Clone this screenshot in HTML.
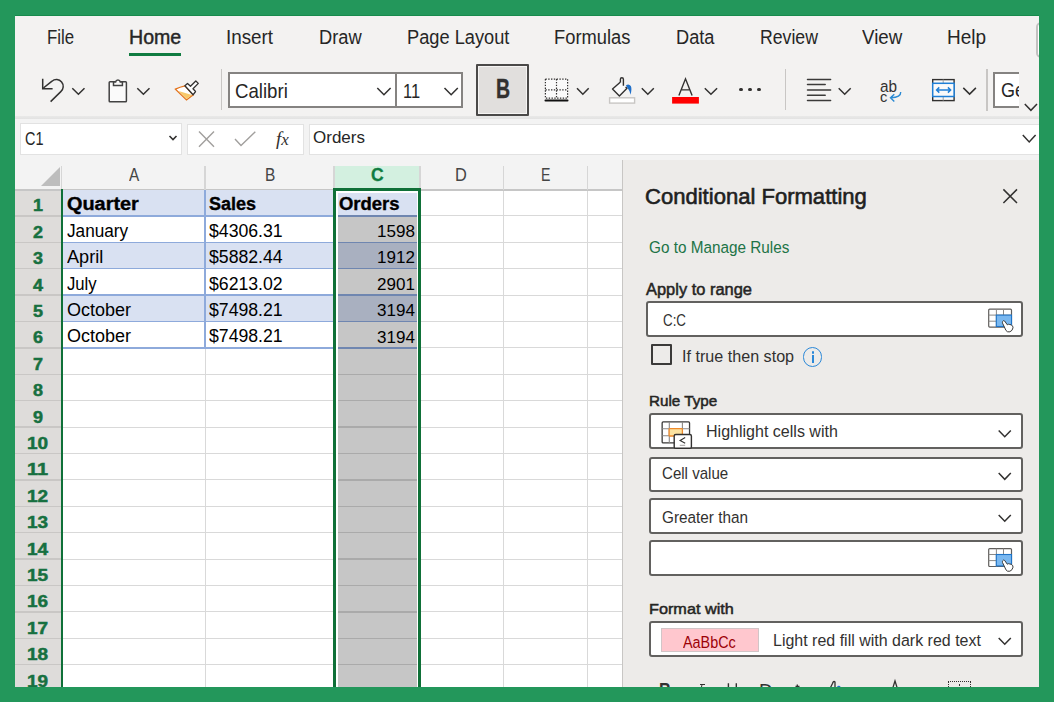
<!DOCTYPE html><html><head><meta charset="utf-8"><style>
*{box-sizing:border-box;margin:0;padding:0}
body{width:1054px;height:702px;background:#23975b;position:relative;overflow:hidden;font-family:"Liberation Sans",sans-serif}
#app{position:absolute;left:15px;top:16px;width:1024px;height:671px;overflow:hidden;background:#f3f2f1;box-shadow:0 -1px 0 #178a4c}
#in{position:absolute;left:-15px;top:-16px;width:1054px;height:702px}
.ab{position:absolute}
svg{position:absolute;overflow:visible}
.t{position:absolute;white-space:nowrap;line-height:1}
.tab{font-size:19px;color:#262626}
.cl{font-size:17px;color:#000}
.bd{font-weight:bold}
.rh{font-size:17px;color:#107c41;font-weight:bold;text-align:center;width:46px;left:15px}
.lbl{font-size:15.5px;color:#252423;font-weight:bold}
.box{position:absolute;background:#fff;border:2px solid #62615f;border-radius:3px}
.bt{font-size:16px;color:#323130}
</style></head><body><div id="app"><div id="in">
<div class="t" style="left:47.30px;top:27.10px;font-size:20.00px;color:#262626;transform:scaleX(0.8416);transform-origin:0 0;">File</div>
<div class="t" style="left:128.70px;top:27.10px;font-size:20.00px;color:#262626;-webkit-text-stroke:0.45px #262626;transform:scaleX(0.9794);transform-origin:0 0;">Home</div>
<div class="t" style="left:226.00px;top:27.10px;font-size:20.00px;color:#262626;transform:scaleX(0.9400);transform-origin:0 0;">Insert</div>
<div class="t" style="left:318.50px;top:27.10px;font-size:20.00px;color:#262626;transform:scaleX(0.9143);transform-origin:0 0;">Draw</div>
<div class="t" style="left:406.90px;top:27.10px;font-size:20.00px;color:#262626;transform:scaleX(0.9118);transform-origin:0 0;">Page Layout</div>
<div class="t" style="left:554.00px;top:27.10px;font-size:20.00px;color:#262626;transform:scaleX(0.9161);transform-origin:0 0;">Formulas</div>
<div class="t" style="left:675.80px;top:27.10px;font-size:20.00px;color:#262626;transform:scaleX(0.9102);transform-origin:0 0;">Data</div>
<div class="t" style="left:759.70px;top:27.10px;font-size:20.00px;color:#262626;transform:scaleX(0.8841);transform-origin:0 0;">Review</div>
<div class="t" style="left:862.10px;top:27.10px;font-size:20.00px;color:#262626;transform:scaleX(0.9349);transform-origin:0 0;">View</div>
<div class="t" style="left:947.20px;top:27.10px;font-size:20.00px;color:#262626;transform:scaleX(0.9489);transform-origin:0 0;">Help</div>
<div class="ab" style="left:128.5px;top:53px;width:52.5px;height:3.3px;background:#107c41"></div>
<div class="ab" style="left:1035.5px;top:22px;width:12px;height:35.5px;border:2px solid #c2c1c0;border-radius:5px;background:#fff"></div>
<svg style="left:0;top:0" width="1" height="1"><g transform="translate(35,72)" fill="none" stroke="#323130" stroke-width="1.5"><path d="M7.7 6.8V16.8H17.6"/><path d="M8.4 16L17 9.2A6.8 6.8 0 0 1 25.8 19.6L15.6 29.6"/></g></svg>
<svg style="left:0;top:0" width="1" height="1"><polyline points="72.3,88.2 78.4,94.2 84.5,88.2" fill="none" stroke="#323130" stroke-width="1.5"/></svg>
<svg style="left:0;top:0" width="1" height="1"><g transform="translate(100,72)" stroke="#424242" stroke-width="1.5"><rect x="9.2" y="9.8" width="17.2" height="20" rx="0.8" fill="#fafafa"/><path d="M13.5 10V13.6H22.4V10H20.3A2.4 2.4 0 0 0 15.6 10Z" fill="#fafafa"/></g></svg>
<svg style="left:0;top:0" width="1" height="1"><polyline points="137.3,88.2 143.4,94.2 149.5,88.2" fill="none" stroke="#323130" stroke-width="1.5"/></svg>
<svg style="left:0;top:0" width="1" height="1"><g transform="translate(168,72)"><path d="M7.4 17.2Q12 14.8 16.9 13.8L25.1 22.8L18.5 28Z" fill="#fff" stroke="#e3731c" stroke-width="1.3"/><path d="M10.5 19L24 23L18.5 27Z" fill="#f7c96a"/><path d="M16.9 13.8L19.5 11.5L22.5 14.3L27.8 9L30.3 11.4L25 16.8L27.5 19.5L25.1 22.8Z" fill="#fff" stroke="#323130" stroke-width="1.3" stroke-linejoin="round"/></g></svg>
<div class="ab" style="left:220.75px;top:69px;width:1.5px;height:41px;background:#c8c6c4"></div>
<div class="ab" style="left:784.65px;top:68.5px;width:1.5px;height:41.5px;background:#c8c6c4"></div>
<div class="ab" style="left:986.05px;top:69px;width:1.5px;height:41.5px;background:#c8c6c4"></div>
<div class="ab" style="left:228px;top:71.5px;width:235px;height:36.5px;border:2px solid #858381;background:#fff"></div>
<div class="ab" style="left:395px;top:71.5px;width:2px;height:36.5px;background:#858381"></div>
<div class="t" style="left:234.80px;top:81.28px;font-size:20.14px;color:#262626;transform:scaleX(0.9263);transform-origin:0 0;">Calibri</div>
<svg style="left:0;top:0" width="1" height="1"><polyline points="377.3,88 383.95000000000005,94.8 390.6,88" fill="none" stroke="#323130" stroke-width="1.5"/></svg>
<div class="t" style="left:403.30px;top:81.52px;font-size:19.86px;color:#262626;transform:scaleX(0.8281);transform-origin:0 0;">11</div>
<svg style="left:0;top:0" width="1" height="1"><polyline points="444.5,88 451.15,94.8 457.8,88" fill="none" stroke="#323130" stroke-width="1.5"/></svg>
<div class="ab" style="left:475.7px;top:63.7px;width:53.3px;height:52.2px;border:2px solid #4a4948;background:#e1dfdd;border-radius:1px;box-shadow:inset 0 0 0 1px #f5f4f3"></div>
<div class="t" style="left:495.80px;top:76.31px;font-size:26.81px;color:#323130;font-weight:bold;-webkit-text-stroke:0.4px #323130;transform:scaleX(0.7252);transform-origin:0 0;">B</div>
<svg style="left:0;top:0" width="1" height="1"><g transform="translate(540,72)"><rect x="5.4" y="7.1" width="22.2" height="19.1" fill="#fafafa" stroke="#323130" stroke-width="1.2" stroke-dasharray="1.4 1.4"/><path d="M16.5 7.1V26.2M5.4 17.9H27.6" stroke="#323130" stroke-width="1.2" stroke-dasharray="1.4 1.4"/><path d="M5.4 28.5H27.6" stroke="#111" stroke-width="1.8" stroke-linecap="round"/></g></svg>
<svg style="left:0;top:0" width="1" height="1"><polyline points="577,88.2 582.85,94.2 588.7,88.2" fill="none" stroke="#323130" stroke-width="1.5"/></svg>
<svg style="left:0;top:0" width="1" height="1"><g transform="translate(602,72)"><path d="M18.2 10.2L10.5 17.1L17.4 23.9L25 16.3L23.6 14.9" fill="#fafafa" stroke="#323130" stroke-width="1.4" stroke-linejoin="round"/><path d="M18.4 10.5V7.3A1.5 1.5 0 0 1 21.4 7.3V13.7" fill="none" stroke="#323130" stroke-width="1.4"/><path d="M23.9 13.6Q26.5 11.2 28.8 14Q30.2 16.5 28.5 22.8Q27.5 18 25.2 15.5Z" fill="#1f6fc9"/><rect x="7.6" y="25.8" width="25" height="5.3" fill="#fff" stroke="#c8c6c4" stroke-width="1.4"/></g></svg>
<svg style="left:0;top:0" width="1" height="1"><polyline points="641.8,88.2 647.8,94.2 653.8,88.2" fill="none" stroke="#323130" stroke-width="1.5"/></svg>
<svg style="left:0;top:0" width="1" height="1"><g transform="translate(665,72)"><path d="M13.9 23.6L20.5 6.8L27.1 23.6M16.8 17.9H24.2" fill="none" stroke="#323130" stroke-width="1.4"/><rect x="7.1" y="25" width="26.8" height="6.6" fill="#f00"/></g></svg>
<svg style="left:0;top:0" width="1" height="1"><polyline points="704.8,88.2 710.95,94.2 717.1,88.2" fill="none" stroke="#323130" stroke-width="1.5"/></svg>
<div class="ab" style="left:739.4px;top:87.8px;width:3.2px;height:3.2px;border-radius:50%;background:#323130"></div>
<div class="ab" style="left:748.4px;top:87.8px;width:3.2px;height:3.2px;border-radius:50%;background:#323130"></div>
<div class="ab" style="left:757.4px;top:87.8px;width:3.2px;height:3.2px;border-radius:50%;background:#323130"></div>
<svg style="left:0;top:0" width="1" height="1"><g transform="translate(800,72)" stroke="#3b3a39" stroke-width="1.5" stroke-linecap="round"><path d="M7.5 7.4H30.6M7.5 12.6H25.2M7.5 18H30.6M7.5 23.2H25.2M7.5 28.5H30.6"/></g></svg>
<svg style="left:0;top:0" width="1" height="1"><polyline points="838.7,88.2 844.7,94.2 850.7,88.2" fill="none" stroke="#323130" stroke-width="1.5"/></svg>
<div class="t" style="left:879.70px;top:77.62px;font-size:16.32px;color:#323130;transform:scaleX(0.9382);transform-origin:0 0;">ab</div>
<div class="t" style="left:879.70px;top:89.34px;font-size:15.37px;color:#323130;transform:scaleX(0.9499);transform-origin:0 0;">c</div>
<svg style="left:0;top:0" width="1" height="1"><g transform="translate(870,72)" fill="none" stroke="#2a8ad4" stroke-width="1.4"><path d="M30.7 20Q31 25.5 21 25.8M24.3 22.2L20.5 25.8L24.3 29.6"/></g></svg>
<svg style="left:0;top:0" width="1" height="1"><g transform="translate(925,64)"><rect x="7.7" y="15.6" width="21.4" height="21" fill="#fafafa" stroke="#323130" stroke-width="1.4"/><path d="M18.2 15.6V36.6" stroke="#a0a0a0" stroke-width="1"/><rect x="7.7" y="19.3" width="21.4" height="13.2" fill="#fafafa" stroke="#1f7fd6" stroke-width="1.5"/><path d="M11.8 26H25.4M14.3 23.4L11.6 26L14.3 28.6M22.9 23.4L25.6 26L22.9 28.6" fill="none" stroke="#1f7fd6" stroke-width="1.5"/></g></svg>
<svg style="left:0;top:0" width="1" height="1"><polyline points="963.3,87.9 969.5999999999999,94.1 975.9,87.9" fill="none" stroke="#323130" stroke-width="1.5"/></svg>
<div class="ab" style="left:993px;top:71.5px;width:40px;height:36px;border:2px solid #858381;background:#fff"></div>
<div class="ab" style="left:1018.5px;top:70px;width:30px;height:40px;background:#f3f2f1"></div>
<div class="ab" style="left:995px;top:73px;width:23.5px;height:33px;overflow:hidden">
<div class="t" style="left:5.70px;top:8.32px;font-size:19.86px;color:#262626;transform:scaleX(0.9054);transform-origin:0 0;">Ge</div>
</div>
<svg style="left:0;top:0" width="1" height="1"><polyline points="1024.8,104 1030.9,110.3 1037,104" fill="none" stroke="#323130" stroke-width="1.5"/></svg>
<div class="ab" style="left:0;top:115.5px;width:1054px;height:3.5px;background:linear-gradient(#e9e9e8,#e2e2e2)"></div>
<div class="ab" style="left:0;top:119px;width:1054px;height:41px;background:#f3f3f3"></div>
<div class="ab" style="left:20.2px;top:123.3px;width:161.5px;height:32px;background:#fff;border:1.8px solid #e2e2e2"></div>
<div class="t" style="left:25.30px;top:130.08px;font-size:18.26px;color:#262626;transform:scaleX(0.7915);transform-origin:0 0;">C1</div>
<svg style="left:0;top:0" width="1" height="1"><polyline points="169.5,136 173,139.5 176.5,136" fill="none" stroke="#323130" stroke-width="1.6"/></svg>
<div class="ab" style="left:186.8px;top:123.5px;width:117px;height:31.7px;background:#fff;border:1.8px solid #e2e2e2"></div>
<svg style="left:0;top:0" width="1" height="1"><path d="M199 131.6L214 146.7M214 131.6L199 146.7" stroke="#a19f9d" stroke-width="1.4"/><polyline points="235,139 241,145.5 255.3,131.8" fill="none" stroke="#a19f9d" stroke-width="1.4"/></svg>
<div class="t" style="left:276px;top:129px;font-size:19px;color:#323130;font-family:'Liberation Serif',serif;font-style:italic">f<span style="font-size:17px">x</span></div>
<div class="ab" style="left:308.7px;top:123.5px;width:760px;height:31.7px;background:#fff;border:1.8px solid #e2e2e2"></div>
<div class="t" style="left:312.90px;top:128.72px;font-size:17.39px;color:#262626;transform:scaleX(0.9787);transform-origin:0 0;">Orders</div>
<svg style="left:0;top:0" width="1" height="1"><polyline points="1022.8,135 1029.1999999999998,142 1035.6,135" fill="none" stroke="#323130" stroke-width="1.5"/></svg>
<div class="ab" style="left:15px;top:160px;width:607px;height:530px;background:#fff"></div>
<div class="ab" style="left:15px;top:155px;width:607px;height:34.5px;background:#f3f3f3"></div>
<div class="ab" style="left:15px;top:189.5px;width:46px;height:500px;background:#dedcda"></div>
<div class="ab" style="left:61.5px;top:215.4px;width:561px;height:1px;background:#d9d9d9"></div>
<div class="ab" style="left:15px;top:215.15px;width:46px;height:1.5px;background:#c9c7c5"></div>
<div class="ab" style="left:61.5px;top:241.8px;width:561px;height:1px;background:#d9d9d9"></div>
<div class="ab" style="left:15px;top:241.55px;width:46px;height:1.5px;background:#c9c7c5"></div>
<div class="ab" style="left:61.5px;top:268.2px;width:561px;height:1px;background:#d9d9d9"></div>
<div class="ab" style="left:15px;top:267.95px;width:46px;height:1.5px;background:#c9c7c5"></div>
<div class="ab" style="left:61.5px;top:294.6px;width:561px;height:1px;background:#d9d9d9"></div>
<div class="ab" style="left:15px;top:294.35px;width:46px;height:1.5px;background:#c9c7c5"></div>
<div class="ab" style="left:61.5px;top:321.0px;width:561px;height:1px;background:#d9d9d9"></div>
<div class="ab" style="left:15px;top:320.75px;width:46px;height:1.5px;background:#c9c7c5"></div>
<div class="ab" style="left:61.5px;top:347.4px;width:561px;height:1px;background:#d9d9d9"></div>
<div class="ab" style="left:15px;top:347.15px;width:46px;height:1.5px;background:#c9c7c5"></div>
<div class="ab" style="left:61.5px;top:373.79999999999995px;width:561px;height:1px;background:#d9d9d9"></div>
<div class="ab" style="left:15px;top:373.54999999999995px;width:46px;height:1.5px;background:#c9c7c5"></div>
<div class="ab" style="left:61.5px;top:400.2px;width:561px;height:1px;background:#d9d9d9"></div>
<div class="ab" style="left:15px;top:399.95px;width:46px;height:1.5px;background:#c9c7c5"></div>
<div class="ab" style="left:61.5px;top:426.6px;width:561px;height:1px;background:#d9d9d9"></div>
<div class="ab" style="left:15px;top:426.35px;width:46px;height:1.5px;background:#c9c7c5"></div>
<div class="ab" style="left:61.5px;top:453.0px;width:561px;height:1px;background:#d9d9d9"></div>
<div class="ab" style="left:15px;top:452.75px;width:46px;height:1.5px;background:#c9c7c5"></div>
<div class="ab" style="left:61.5px;top:479.4px;width:561px;height:1px;background:#d9d9d9"></div>
<div class="ab" style="left:15px;top:479.15px;width:46px;height:1.5px;background:#c9c7c5"></div>
<div class="ab" style="left:61.5px;top:505.79999999999995px;width:561px;height:1px;background:#d9d9d9"></div>
<div class="ab" style="left:15px;top:505.54999999999995px;width:46px;height:1.5px;background:#c9c7c5"></div>
<div class="ab" style="left:61.5px;top:532.2px;width:561px;height:1px;background:#d9d9d9"></div>
<div class="ab" style="left:15px;top:531.95px;width:46px;height:1.5px;background:#c9c7c5"></div>
<div class="ab" style="left:61.5px;top:558.5999999999999px;width:561px;height:1px;background:#d9d9d9"></div>
<div class="ab" style="left:15px;top:558.3499999999999px;width:46px;height:1.5px;background:#c9c7c5"></div>
<div class="ab" style="left:61.5px;top:585.0px;width:561px;height:1px;background:#d9d9d9"></div>
<div class="ab" style="left:15px;top:584.75px;width:46px;height:1.5px;background:#c9c7c5"></div>
<div class="ab" style="left:61.5px;top:611.4px;width:561px;height:1px;background:#d9d9d9"></div>
<div class="ab" style="left:15px;top:611.15px;width:46px;height:1.5px;background:#c9c7c5"></div>
<div class="ab" style="left:61.5px;top:637.8px;width:561px;height:1px;background:#d9d9d9"></div>
<div class="ab" style="left:15px;top:637.55px;width:46px;height:1.5px;background:#c9c7c5"></div>
<div class="ab" style="left:61.5px;top:664.2px;width:561px;height:1px;background:#d9d9d9"></div>
<div class="ab" style="left:15px;top:663.95px;width:46px;height:1.5px;background:#c9c7c5"></div>
<div class="ab" style="left:61.5px;top:690.5999999999999px;width:561px;height:1px;background:#d9d9d9"></div>
<div class="ab" style="left:15px;top:690.3499999999999px;width:46px;height:1.5px;background:#c9c7c5"></div>
<div class="ab" style="left:61.5px;top:717.0px;width:561px;height:1px;background:#d9d9d9"></div>
<div class="ab" style="left:15px;top:716.75px;width:46px;height:1.5px;background:#c9c7c5"></div>
<div class="ab" style="left:204.5px;top:189.5px;width:1px;height:500px;background:#d9d9d9"></div>
<div class="ab" style="left:333.5px;top:189.5px;width:1px;height:500px;background:#d9d9d9"></div>
<div class="ab" style="left:419.5px;top:189.5px;width:1px;height:500px;background:#d9d9d9"></div>
<div class="ab" style="left:503.0px;top:189.5px;width:1px;height:500px;background:#d9d9d9"></div>
<div class="ab" style="left:587.0px;top:189.5px;width:1px;height:500px;background:#d9d9d9"></div>
<div class="ab" style="left:15px;top:189px;width:607px;height:1.7px;background:#c6c6c6"></div>
<svg style="left:0;top:0" width="1" height="1"><polygon points="60,167 60,186 41,186" fill="#bdbdbd"/></svg>
<div class="ab" style="left:333.5px;top:165.5px;width:87px;height:23.5px;background:#d3f0e0"></div>
<div class="ab" style="left:60.75px;top:165.5px;width:1.5px;height:24px;background:#d6d6d6"></div>
<div class="ab" style="left:204.25px;top:165.5px;width:1.5px;height:24px;background:#d6d6d6"></div>
<div class="ab" style="left:333.25px;top:165.5px;width:1.5px;height:24px;background:#d6d6d6"></div>
<div class="ab" style="left:419.25px;top:165.5px;width:1.5px;height:24px;background:#d6d6d6"></div>
<div class="ab" style="left:502.75px;top:165.5px;width:1.5px;height:24px;background:#d6d6d6"></div>
<div class="ab" style="left:586.75px;top:165.5px;width:1.5px;height:24px;background:#d6d6d6"></div>
<div class="t" style="left:129.00px;top:167.22px;font-size:17.97px;color:#454545;transform:scaleX(0.8554);transform-origin:0 0;">A</div>
<div class="t" style="left:265.30px;top:167.22px;font-size:17.97px;color:#454545;transform:scaleX(0.8619);transform-origin:0 0;">B</div>
<div class="t" style="left:371.20px;top:167.22px;font-size:17.97px;color:#107c41;font-weight:bold;-webkit-text-stroke:0.3px #107c41;transform:scaleX(0.9738);transform-origin:0 0;">C</div>
<div class="t" style="left:455.00px;top:167.22px;font-size:17.97px;color:#454545;transform:scaleX(0.9120);transform-origin:0 0;">D</div>
<div class="t" style="left:541.20px;top:167.22px;font-size:17.97px;color:#454545;transform:scaleX(0.7866);transform-origin:0 0;">E</div>
<div class="ab" style="left:62.5px;top:190.0px;width:271px;height:25.4px;background:#d9e1f2"></div>
<div class="ab" style="left:62.5px;top:215.15px;width:271px;height:1.5px;background:#8eaadb"></div>
<div class="t" style="left:66.60px;top:196.37px;font-size:17.68px;color:#000;font-weight:bold;-webkit-text-stroke:0.35px #000;transform:scaleX(1.1249);transform-origin:0 0;">Quarter</div>
<div class="t" style="left:208.60px;top:196.37px;font-size:17.68px;color:#000;font-weight:bold;-webkit-text-stroke:0.35px #000;transform:scaleX(1.0187);transform-origin:0 0;">Sales</div>
<div class="ab" style="left:62.5px;top:241.55px;width:271px;height:1.5px;background:#8eaadb"></div>
<div class="t" style="left:66.60px;top:222.77px;font-size:17.68px;color:#000;transform:scaleX(0.9723);transform-origin:0 0;">January</div>
<div class="t" style="left:208.60px;top:222.77px;font-size:17.68px;color:#000;transform:scaleX(0.9996);transform-origin:0 0;">$4306.31</div>
<div class="ab" style="left:62.5px;top:242.8px;width:271px;height:25.4px;background:#d9e1f2"></div>
<div class="ab" style="left:62.5px;top:267.95px;width:271px;height:1.5px;background:#8eaadb"></div>
<div class="t" style="left:66.60px;top:249.17px;font-size:17.68px;color:#000;transform:scaleX(1.0237);transform-origin:0 0;">April</div>
<div class="t" style="left:208.60px;top:249.17px;font-size:17.68px;color:#000;transform:scaleX(0.9996);transform-origin:0 0;">$5882.44</div>
<div class="ab" style="left:62.5px;top:294.34999999999997px;width:271px;height:1.5px;background:#8eaadb"></div>
<div class="t" style="left:66.60px;top:275.57px;font-size:17.68px;color:#000;transform:scaleX(0.9437);transform-origin:0 0;">July</div>
<div class="t" style="left:208.60px;top:275.57px;font-size:17.68px;color:#000;transform:scaleX(0.9996);transform-origin:0 0;">$6213.02</div>
<div class="ab" style="left:62.5px;top:295.6px;width:271px;height:25.4px;background:#d9e1f2"></div>
<div class="ab" style="left:62.5px;top:320.75px;width:271px;height:1.5px;background:#8eaadb"></div>
<div class="t" style="left:66.60px;top:301.97px;font-size:17.68px;color:#000;transform:scaleX(1.0182);transform-origin:0 0;">October</div>
<div class="t" style="left:208.60px;top:301.97px;font-size:17.68px;color:#000;transform:scaleX(0.9996);transform-origin:0 0;">$7498.21</div>
<div class="ab" style="left:62.5px;top:347.15px;width:271px;height:1.5px;background:#8eaadb"></div>
<div class="t" style="left:66.60px;top:328.37px;font-size:17.68px;color:#000;transform:scaleX(1.0182);transform-origin:0 0;">October</div>
<div class="t" style="left:208.60px;top:328.37px;font-size:17.68px;color:#000;transform:scaleX(0.9996);transform-origin:0 0;">$7498.21</div>
<div class="ab" style="left:204.25px;top:189.5px;width:1.5px;height:158.39999999999998px;background:#8eaadb"></div>
<div class="ab" style="left:335px;top:189.5px;width:84px;height:500px;background:#fff"></div>
<div class="ab" style="left:337.6px;top:192.8px;width:79px;height:22.349999999999994px;background:#d9e1f2"></div>
<div class="ab" style="left:337.6px;top:215.15px;width:79px;height:1.5px;background:#6f86b0"></div>
<div class="t" style="left:338.80px;top:196.47px;font-size:17.68px;color:#000;font-weight:bold;-webkit-text-stroke:0.35px #000;transform:scaleX(1.0449);transform-origin:0 0;">Orders</div>
<div class="ab" style="left:337.6px;top:216.65px;width:79px;height:24.900000000000006px;background:#c6c6c6"></div>
<div class="ab" style="left:337.6px;top:241.55px;width:79px;height:1.5px;background:#6f86b0"></div>
<div class="t" style="left:376.70px;top:222.92px;font-size:17.39px;color:#000;transform:scaleX(0.9794);transform-origin:0 0;">1598</div>
<div class="ab" style="left:337.6px;top:243.05px;width:79px;height:24.899999999999977px;background:#a9b0c0"></div>
<div class="ab" style="left:337.6px;top:267.95px;width:79px;height:1.5px;background:#6f86b0"></div>
<div class="t" style="left:376.70px;top:249.32px;font-size:17.39px;color:#000;transform:scaleX(0.9794);transform-origin:0 0;">1912</div>
<div class="ab" style="left:337.6px;top:269.45px;width:79px;height:24.899999999999977px;background:#c6c6c6"></div>
<div class="ab" style="left:337.6px;top:294.34999999999997px;width:79px;height:1.5px;background:#6f86b0"></div>
<div class="t" style="left:376.70px;top:275.72px;font-size:17.39px;color:#000;transform:scaleX(0.9794);transform-origin:0 0;">2901</div>
<div class="ab" style="left:337.6px;top:295.85px;width:79px;height:24.899999999999977px;background:#a9b0c0"></div>
<div class="ab" style="left:337.6px;top:320.75px;width:79px;height:1.5px;background:#6f86b0"></div>
<div class="t" style="left:376.70px;top:302.12px;font-size:17.39px;color:#000;transform:scaleX(0.9794);transform-origin:0 0;">3194</div>
<div class="ab" style="left:337.6px;top:322.25px;width:79px;height:24.899999999999977px;background:#c6c6c6"></div>
<div class="ab" style="left:337.6px;top:347.15px;width:79px;height:1.5px;background:#6f86b0"></div>
<div class="t" style="left:376.70px;top:328.52px;font-size:17.39px;color:#000;transform:scaleX(0.9794);transform-origin:0 0;">3194</div>
<div class="ab" style="left:337.6px;top:348.65px;width:79px;height:24.899999999999977px;background:#c6c6c6"></div>
<div class="ab" style="left:337.6px;top:373.54999999999995px;width:79px;height:1.5px;background:#aaaaaa"></div>
<div class="ab" style="left:337.6px;top:375.04999999999995px;width:79px;height:24.899999999999977px;background:#c6c6c6"></div>
<div class="ab" style="left:337.6px;top:399.94999999999993px;width:79px;height:1.5px;background:#aaaaaa"></div>
<div class="ab" style="left:337.6px;top:401.45px;width:79px;height:24.899999999999977px;background:#c6c6c6"></div>
<div class="ab" style="left:337.6px;top:426.34999999999997px;width:79px;height:1.5px;background:#aaaaaa"></div>
<div class="ab" style="left:337.6px;top:427.85px;width:79px;height:24.899999999999977px;background:#c6c6c6"></div>
<div class="ab" style="left:337.6px;top:452.75px;width:79px;height:1.5px;background:#aaaaaa"></div>
<div class="ab" style="left:337.6px;top:454.25px;width:79px;height:24.899999999999977px;background:#c6c6c6"></div>
<div class="ab" style="left:337.6px;top:479.15px;width:79px;height:1.5px;background:#aaaaaa"></div>
<div class="ab" style="left:337.6px;top:480.65px;width:79px;height:24.899999999999977px;background:#c6c6c6"></div>
<div class="ab" style="left:337.6px;top:505.54999999999995px;width:79px;height:1.5px;background:#aaaaaa"></div>
<div class="ab" style="left:337.6px;top:507.04999999999995px;width:79px;height:24.899999999999977px;background:#c6c6c6"></div>
<div class="ab" style="left:337.6px;top:531.9499999999999px;width:79px;height:1.5px;background:#aaaaaa"></div>
<div class="ab" style="left:337.6px;top:533.45px;width:79px;height:24.899999999999977px;background:#c6c6c6"></div>
<div class="ab" style="left:337.6px;top:558.35px;width:79px;height:1.5px;background:#aaaaaa"></div>
<div class="ab" style="left:337.6px;top:559.8499999999999px;width:79px;height:24.899999999999977px;background:#c6c6c6"></div>
<div class="ab" style="left:337.6px;top:584.7499999999999px;width:79px;height:1.5px;background:#aaaaaa"></div>
<div class="ab" style="left:337.6px;top:586.25px;width:79px;height:24.899999999999977px;background:#c6c6c6"></div>
<div class="ab" style="left:337.6px;top:611.15px;width:79px;height:1.5px;background:#aaaaaa"></div>
<div class="ab" style="left:337.6px;top:612.65px;width:79px;height:24.899999999999977px;background:#c6c6c6"></div>
<div class="ab" style="left:337.6px;top:637.55px;width:79px;height:1.5px;background:#aaaaaa"></div>
<div class="ab" style="left:337.6px;top:639.05px;width:79px;height:24.899999999999977px;background:#c6c6c6"></div>
<div class="ab" style="left:337.6px;top:663.9499999999999px;width:79px;height:1.5px;background:#aaaaaa"></div>
<div class="ab" style="left:337.6px;top:665.45px;width:79px;height:24.899999999999977px;background:#c6c6c6"></div>
<div class="ab" style="left:337.6px;top:690.35px;width:79px;height:1.5px;background:#aaaaaa"></div>
<div class="ab" style="left:333px;top:188px;width:88px;height:520px;border:3px solid #0f7038"></div>
<div class="ab" style="left:60.7px;top:189px;width:2.6px;height:520px;background:#0f7038"></div>
<div class="t" style="left:33.00px;top:197.42px;font-size:17.39px;color:#177040;font-weight:bold;-webkit-text-stroke:0.5px #177040;transform:scaleX(1.0360);transform-origin:0 0;">1</div>
<div class="t" style="left:33.00px;top:223.82px;font-size:17.39px;color:#177040;font-weight:bold;-webkit-text-stroke:0.5px #177040;transform:scaleX(1.0360);transform-origin:0 0;">2</div>
<div class="t" style="left:33.00px;top:250.22px;font-size:17.39px;color:#177040;font-weight:bold;-webkit-text-stroke:0.5px #177040;transform:scaleX(1.0360);transform-origin:0 0;">3</div>
<div class="t" style="left:33.00px;top:276.62px;font-size:17.39px;color:#177040;font-weight:bold;-webkit-text-stroke:0.5px #177040;transform:scaleX(1.0360);transform-origin:0 0;">4</div>
<div class="t" style="left:33.00px;top:303.02px;font-size:17.39px;color:#177040;font-weight:bold;-webkit-text-stroke:0.5px #177040;transform:scaleX(1.0360);transform-origin:0 0;">5</div>
<div class="t" style="left:33.00px;top:329.42px;font-size:17.39px;color:#177040;font-weight:bold;-webkit-text-stroke:0.5px #177040;transform:scaleX(1.0360);transform-origin:0 0;">6</div>
<div class="t" style="left:33.00px;top:355.82px;font-size:17.39px;color:#177040;font-weight:bold;-webkit-text-stroke:0.5px #177040;transform:scaleX(1.0360);transform-origin:0 0;">7</div>
<div class="t" style="left:33.00px;top:382.22px;font-size:17.39px;color:#177040;font-weight:bold;-webkit-text-stroke:0.5px #177040;transform:scaleX(1.0360);transform-origin:0 0;">8</div>
<div class="t" style="left:33.00px;top:408.62px;font-size:17.39px;color:#177040;font-weight:bold;-webkit-text-stroke:0.5px #177040;transform:scaleX(1.0360);transform-origin:0 0;">9</div>
<div class="t" style="left:27.45px;top:435.02px;font-size:17.39px;color:#177040;font-weight:bold;-webkit-text-stroke:0.5px #177040;transform:scaleX(1.0930);transform-origin:0 0;">10</div>
<div class="t" style="left:27.45px;top:461.42px;font-size:17.39px;color:#177040;font-weight:bold;-webkit-text-stroke:0.5px #177040;transform:scaleX(1.1500);transform-origin:0 0;">11</div>
<div class="t" style="left:27.45px;top:487.82px;font-size:17.39px;color:#177040;font-weight:bold;-webkit-text-stroke:0.5px #177040;transform:scaleX(1.0930);transform-origin:0 0;">12</div>
<div class="t" style="left:27.45px;top:514.22px;font-size:17.39px;color:#177040;font-weight:bold;-webkit-text-stroke:0.5px #177040;transform:scaleX(1.0930);transform-origin:0 0;">13</div>
<div class="t" style="left:27.45px;top:540.62px;font-size:17.39px;color:#177040;font-weight:bold;-webkit-text-stroke:0.5px #177040;transform:scaleX(1.0930);transform-origin:0 0;">14</div>
<div class="t" style="left:27.45px;top:567.02px;font-size:17.39px;color:#177040;font-weight:bold;-webkit-text-stroke:0.5px #177040;transform:scaleX(1.0930);transform-origin:0 0;">15</div>
<div class="t" style="left:27.45px;top:593.42px;font-size:17.39px;color:#177040;font-weight:bold;-webkit-text-stroke:0.5px #177040;transform:scaleX(1.0930);transform-origin:0 0;">16</div>
<div class="t" style="left:27.45px;top:619.82px;font-size:17.39px;color:#177040;font-weight:bold;-webkit-text-stroke:0.5px #177040;transform:scaleX(1.0930);transform-origin:0 0;">17</div>
<div class="t" style="left:27.45px;top:646.22px;font-size:17.39px;color:#177040;font-weight:bold;-webkit-text-stroke:0.5px #177040;transform:scaleX(1.0930);transform-origin:0 0;">18</div>
<div class="t" style="left:27.45px;top:672.62px;font-size:17.39px;color:#177040;font-weight:bold;-webkit-text-stroke:0.5px #177040;transform:scaleX(1.0930);transform-origin:0 0;">19</div>
<div class="ab" style="left:621.5px;top:160px;width:440px;height:540px;background:#edebe9;border-left:1.8px solid #c8c6c4"></div>
<div class="t" style="left:644.60px;top:187.17px;font-size:21.45px;color:#1f1f1f;-webkit-text-stroke:0.6px #1f1f1f;transform:scaleX(1.0284);transform-origin:0 0;">Conditional Formatting</div>
<svg style="left:0;top:0" width="1" height="1"><path d="M1003.4 189.4L1017 203M1017 189.4L1003.4 203" stroke="#323130" stroke-width="1.5"/></svg>
<div class="t" style="left:648.70px;top:239.85px;font-size:15.94px;color:#217346;transform:scaleX(0.9604);transform-origin:0 0;">Go to Manage Rules</div>
<div class="t" style="left:646.00px;top:281.95px;font-size:15.94px;color:#252423;-webkit-text-stroke:0.5px #252423;transform:scaleX(1.0309);transform-origin:0 0;">Apply to range</div>
<div class="box" style="left:646.3px;top:301.2px;width:377px;height:35.5px"></div>
<div class="t" style="left:663.00px;top:313.13px;font-size:16.67px;color:#323130;transform:scaleX(0.8023);transform-origin:0 0;">C:C</div>
<svg style="left:0;top:0" width="1" height="1"><g transform="translate(988.7,309.2)"><rect x="0" y="0" width="22.8" height="17.9" rx="1" fill="#fff" stroke="#605e5c" stroke-width="1.2"/><path d="M0 5.9H22.8M0 12H22.8M7.7 0V17.9M14.8 0V17.9" stroke="#8a8886" stroke-width="1"/><rect x="7.6" y="5.9" width="15.2" height="11.4" fill="#7ab8f0" stroke="#1f74c7" stroke-width="1.1"/><path d="M13.9 12.3Q14.6 10.9 15.9 11.8L18.6 15.6Q19.9 14.6 21.1 15.4Q22.5 15.2 23.1 16.4Q24.4 16.6 24.3 18.6Q23.8 21.6 21.2 22.6Q18.6 23.3 17.3 21.3L13.8 13.9Q13.6 13 13.9 12.3Z" fill="#fff" stroke="#3b3a39" stroke-width="1"/></g></svg>
<div class="ab" style="left:651.3px;top:344px;width:21px;height:20.6px;border:2px solid #3b3a39;border-radius:1px"></div>
<div class="t" style="left:682.20px;top:348.81px;font-size:16.81px;color:#323130;transform:scaleX(0.9603);transform-origin:0 0;">If true then stop</div>
<div class="ab" style="left:803.2px;top:347.4px;width:19.2px;height:19.2px;border:1.4px solid #2b88d8;border-radius:50%"></div>
<div class="ab" style="left:811.5px;top:351.2px;width:2.6px;height:2.6px;background:#2b88d8;border-radius:50%"></div>
<div class="ab" style="left:811.7px;top:354.8px;width:2.2px;height:8px;background:#2b88d8"></div>
<div class="t" style="left:648.90px;top:393.83px;font-size:14.78px;color:#252423;-webkit-text-stroke:0.5px #252423;transform:scaleX(1.0302);transform-origin:0 0;">Rule Type</div>
<div class="box" style="left:649.3px;top:413.4px;width:374px;height:36.10000000000002px"></div>
<svg style="left:0;top:0" width="1" height="1"><polyline points="998.7,430.45 1004.75,436.75 1010.8,430.45" fill="none" stroke="#323130" stroke-width="1.5"/></svg>
<div class="box" style="left:649.3px;top:456.5px;width:374px;height:35.0px"></div>
<svg style="left:0;top:0" width="1" height="1"><polyline points="998.7,473.0 1004.75,479.3 1010.8,473.0" fill="none" stroke="#323130" stroke-width="1.5"/></svg>
<div class="box" style="left:649.3px;top:498.1px;width:374px;height:35.69999999999993px"></div>
<svg style="left:0;top:0" width="1" height="1"><polyline points="998.7,514.95 1004.75,521.25 1010.8,514.95" fill="none" stroke="#323130" stroke-width="1.5"/></svg>
<div class="box" style="left:649.3px;top:540.2px;width:374px;height:35.799999999999955px"></div>
<svg style="left:0;top:0" width="1" height="1"><g transform="translate(656,416)"><rect x="6.15" y="5.9" width="27.4" height="21" rx="1" fill="#fff" stroke="#3b3a39" stroke-width="1.3"/><path d="M13.3 5.9V26.9M26.4 5.9V26.9M6.15 12.8H33.6M6.15 19.7H33.6" stroke="#8a8886" stroke-width="1.1"/><rect x="13.1" y="12.6" width="13.3" height="7.4" rx="0.8" fill="#fbe2a0" stroke="#ee8a2c" stroke-width="1.3"/><rect x="18.2" y="18.5" width="17.2" height="13.8" rx="1.6" fill="#fff" stroke="#323130" stroke-width="1.4"/><path d="M29.2 21.5L24.1 24.5L29.2 27.3" fill="none" stroke="#323130" stroke-width="1.1"/><path d="M23.8 29.3H29.2" stroke="#8a8886" stroke-width="0.8"/></g></svg>
<div class="t" style="left:705.50px;top:424.46px;font-size:16.52px;color:#323130;transform:scaleX(0.9706);transform-origin:0 0;">Highlight cells with</div>
<div class="t" style="left:661.70px;top:466.09px;font-size:16.96px;color:#323130;transform:scaleX(0.8893);transform-origin:0 0;">Cell value</div>
<div class="t" style="left:662.00px;top:509.20px;font-size:16.23px;color:#323130;transform:scaleX(0.9436);transform-origin:0 0;">Greater than</div>
<svg style="left:0;top:0" width="1" height="1"><g transform="translate(988.7,548.6)"><rect x="0" y="0" width="22.8" height="17.9" rx="1" fill="#fff" stroke="#605e5c" stroke-width="1.2"/><path d="M0 5.9H22.8M0 12H22.8M7.7 0V17.9M14.8 0V17.9" stroke="#8a8886" stroke-width="1"/><rect x="7.6" y="5.9" width="15.2" height="11.4" fill="#7ab8f0" stroke="#1f74c7" stroke-width="1.1"/><path d="M13.9 12.3Q14.6 10.9 15.9 11.8L18.6 15.6Q19.9 14.6 21.1 15.4Q22.5 15.2 23.1 16.4Q24.4 16.6 24.3 18.6Q23.8 21.6 21.2 22.6Q18.6 23.3 17.3 21.3L13.8 13.9Q13.6 13 13.9 12.3Z" fill="#fff" stroke="#3b3a39" stroke-width="1"/></g></svg>
<div class="t" style="left:648.90px;top:600.82px;font-size:15.51px;color:#252423;-webkit-text-stroke:0.5px #252423;transform:scaleX(1.0478);transform-origin:0 0;">Format with</div>
<div class="box" style="left:649.3px;top:621px;width:374px;height:35.8px"></div>
<div class="ab" style="left:661px;top:628px;width:97.8px;height:24px;background:#ffc7ce;border:1px solid #d2c5c7"></div>
<div class="t" style="left:683.00px;top:633.90px;font-size:16.23px;color:#9c0006;transform:scaleX(0.8863);transform-origin:0 0;">AaBbCc</div>
<div class="t" style="left:772.70px;top:631.70px;font-size:16.23px;color:#323130;transform:scaleX(0.9858);transform-origin:0 0;">Light red fill with dark red text</div>
<svg style="left:0;top:0" width="1" height="1"><polyline points="998.7,637.9 1004.75,644.2 1010.8,637.9" fill="none" stroke="#323130" stroke-width="1.5"/></svg>
<div class="t" style="left:659.40px;top:679.55px;font-size:20.29px;color:#323130;font-weight:bold;transform:scaleX(0.8146);transform-origin:0 0;">B</div>
<div class="ab" style="left:699.5px;top:683.7px;width:5.5px;height:1.4px;background:#323130"></div>
<div class="ab" style="left:701.3px;top:683.7px;width:1.3px;height:6px;background:#323130;transform:skewX(-12deg)"></div>
<svg style="left:0;top:0" width="1" height="1"><path d="M728.4 683.3V690M736.3 683.3V690" stroke="#323130" stroke-width="1.4"/></svg>
<div class="t" style="left:759.30px;top:680.55px;font-size:20.29px;color:#323130;transform:scaleX(0.9378);transform-origin:0 0;">D</div>
<svg style="left:0;top:0" width="1" height="1"><path d="M797.3 684.5V690M795.5 686.5H799.5" stroke="#323130" stroke-width="1.3"/></svg>
<svg style="left:0;top:0" width="1" height="1"><path d="M829.3 690L832.5 683.5Q833.5 680.5 835 682V690" fill="none" stroke="#323130" stroke-width="1.3"/><circle cx="838.8" cy="687.6" r="1.8" fill="#1f6fc9"/></svg>
<svg style="left:0;top:0" width="1" height="1"><path d="M891.5 692L895 681L898.5 692" fill="none" stroke="#323130" stroke-width="1.3"/></svg>
<div class="ab" style="left:947.5px;top:681px;width:23px;height:10px;border-top:1.3px dotted #323130;border-left:1.3px dotted #323130;border-right:1.3px dotted #323130"></div>
<div class="ab" style="left:958.5px;top:684px;width:1.3px;height:6px;border-left:1.3px dotted #323130"></div>
</div></div></body></html>
